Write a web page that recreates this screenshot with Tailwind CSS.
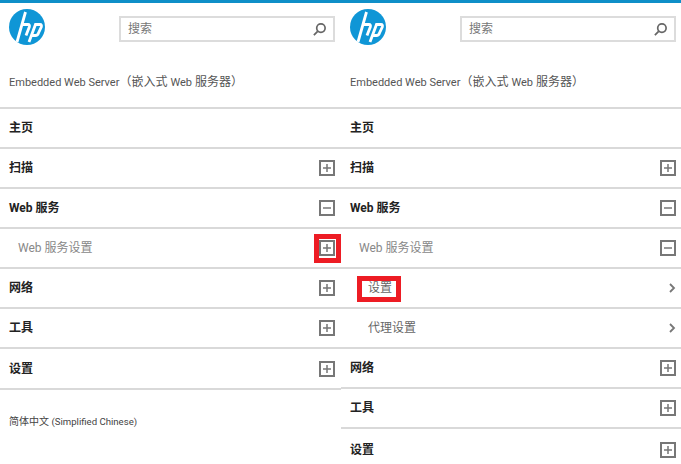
<!DOCTYPE html>
<html lang="zh-CN">
<head>
  <meta charset="UTF-8" />
  <title>HP Embedded Web Server</title>
  <script src="https://cdn.jsdelivr.net/npm/@tailwindcss/browser@4"></script>
</head>
<body class="w-[681px] h-[464px] overflow-hidden bg-white font-['Roboto','Noto_Sans_CJK_SC',sans-serif] text-[12px] text-[#222]">
  <div class="flex h-[464px] overflow-hidden">

    <!-- Left panel -->
    <div class="relative w-[341px] shrink-0 border-t-[3px] border-[#0f8fc8]">
      <div class="flex h-[54px] pl-[9px] pr-[6px] pt-[6px] items-start justify-between">
        <svg class="w-[36px] h-[36px]" viewBox="0 0 36 36"><circle cx="18" cy="18" r="18" fill="#0f96d6"/><path d="M16.500 3 L8 33 M12 15.500 H19 Q21 15.500 20.300 18 L17 26.500 M20 33 L26.500 15.500 H31 Q33 15.500 32.300 18 L29.500 24 Q28.700 26.500 26.500 26.500 H23" fill="none" stroke="#fff" stroke-width="2.800"/></svg>
        <div class="mt-[7px] flex h-[26px] w-[216px] items-center justify-between border-2 border-[#dcdcdc] pl-[7px] pr-[6px] text-[12px] text-[#777]">
          <span>搜索</span>
          <svg class="w-[15px] h-[15px]" viewBox="0 0 16 16" fill="none" stroke="#666" stroke-width="1.800"><circle cx="9.500" cy="6.500" r="4.500"/><path d="M6 10 L2 14"/></svg>
        </div>
      </div>
      <div class="h-[52px] border-b-2 border-[#d9d9d9] pl-[9px] pt-[16px] text-[#555]"><span class="text-[11px]">Embedded Web Server</span>（嵌入式 <span class="text-[11px]">Web</span> 服务器）</div>

      <div class="flex h-[40px] items-center justify-between border-b-2 border-[#d9d9d9] pl-[9px] pr-[6px] font-bold">主页</div>
      <div class="flex h-[40px] items-center justify-between border-b-2 border-[#d9d9d9] pl-[9px] pr-[6px] font-bold">扫描
        <svg class="w-[16px] h-[16px]" viewBox="0 0 16 16" fill="none" stroke="#777"><rect x="1" y="1" width="14" height="14" stroke-width="2"/><path d="M4 8 H12 M8 4 V12" stroke-width="1.500"/></svg>
      </div>
      <div class="flex h-[40px] items-center justify-between border-b-2 border-[#d9d9d9] pl-[9px] pr-[6px] font-bold">Web 服务
        <svg class="w-[16px] h-[16px]" viewBox="0 0 16 16" fill="none" stroke="#777"><rect x="1" y="1" width="14" height="14" stroke-width="2"/><path d="M4 8 H12" stroke-width="1.500"/></svg>
      </div>
      <div class="flex h-[40px] items-center justify-between border-b-2 border-[#d9d9d9] pl-[18px] pr-[6px] text-[#888]">Web 服务设置
        <svg class="w-[16px] h-[16px]" viewBox="0 0 16 16" fill="none" stroke="#777"><rect x="1" y="1" width="14" height="14" stroke-width="2"/><path d="M4 8 H12 M8 4 V12" stroke-width="1.500"/></svg>
      </div>
      <div class="flex h-[40px] items-center justify-between border-b-2 border-[#d9d9d9] pl-[9px] pr-[6px] font-bold">网络
        <svg class="w-[16px] h-[16px]" viewBox="0 0 16 16" fill="none" stroke="#777"><rect x="1" y="1" width="14" height="14" stroke-width="2"/><path d="M4 8 H12 M8 4 V12" stroke-width="1.500"/></svg>
      </div>
      <div class="flex h-[40px] items-center justify-between border-b-2 border-[#d9d9d9] pl-[9px] pr-[6px] font-bold">工具
        <svg class="w-[16px] h-[16px]" viewBox="0 0 16 16" fill="none" stroke="#777"><rect x="1" y="1" width="14" height="14" stroke-width="2"/><path d="M4 8 H12 M8 4 V12" stroke-width="1.500"/></svg>
      </div>
      <div class="flex h-[41px] items-center justify-between border-b-2 border-[#d9d9d9] pl-[9px] pr-[6px] font-bold">设置
        <svg class="w-[16px] h-[16px]" viewBox="0 0 16 16" fill="none" stroke="#777"><rect x="1" y="1" width="14" height="14" stroke-width="2"/><path d="M4 8 H12 M8 4 V12" stroke-width="1.500"/></svg>
      </div>
      <div class="pl-[9px] pt-[24px] text-[10px] text-[#444]">简体中文 <span class="text-[9.6px]">(Simplified Chinese)</span></div>

      <!-- red highlight -->
      <div class="absolute left-[314px] top-[231px] h-[29px] w-[27px] border-[5px] border-[#ed1c24]"></div>
    </div>

    <!-- Right panel -->
    <div class="relative w-[340px] shrink-0 border-t-[3px] border-[#0f8fc8]">
      <div class="flex h-[54px] pl-[9px] pr-[5px] pt-[6px] items-start justify-between">
        <svg class="w-[36px] h-[36px]" viewBox="0 0 36 36"><circle cx="18" cy="18" r="18" fill="#0f96d6"/><path d="M16.500 3 L8 33 M12 15.500 H19 Q21 15.500 20.300 18 L17 26.500 M20 33 L26.500 15.500 H31 Q33 15.500 32.300 18 L29.500 24 Q28.700 26.500 26.500 26.500 H23" fill="none" stroke="#fff" stroke-width="2.800"/></svg>
        <div class="mt-[7px] flex h-[26px] w-[216px] items-center justify-between border-2 border-[#dcdcdc] pl-[7px] pr-[6px] text-[12px] text-[#777]">
          <span>搜索</span>
          <svg class="w-[15px] h-[15px]" viewBox="0 0 16 16" fill="none" stroke="#666" stroke-width="1.800"><circle cx="9.500" cy="6.500" r="4.500"/><path d="M6 10 L2 14"/></svg>
        </div>
      </div>
      <div class="h-[52px] border-b-2 border-[#d9d9d9] pl-[9px] pt-[16px] text-[#555]"><span class="text-[11px]">Embedded Web Server</span>（嵌入式 <span class="text-[11px]">Web</span> 服务器）</div>

      <div class="flex h-[40px] items-center justify-between border-b-2 border-[#d9d9d9] pl-[9px] pr-[5px] font-bold">主页</div>
      <div class="flex h-[40px] items-center justify-between border-b-2 border-[#d9d9d9] pl-[9px] pr-[5px] font-bold">扫描
        <svg class="w-[16px] h-[16px]" viewBox="0 0 16 16" fill="none" stroke="#777"><rect x="1" y="1" width="14" height="14" stroke-width="2"/><path d="M4 8 H12 M8 4 V12" stroke-width="1.500"/></svg>
      </div>
      <div class="flex h-[40px] items-center justify-between border-b-2 border-[#d9d9d9] pl-[9px] pr-[5px] font-bold">Web 服务
        <svg class="w-[16px] h-[16px]" viewBox="0 0 16 16" fill="none" stroke="#777"><rect x="1" y="1" width="14" height="14" stroke-width="2"/><path d="M4 8 H12" stroke-width="1.500"/></svg>
      </div>
      <div class="flex h-[40px] items-center justify-between border-b-2 border-[#d9d9d9] pl-[18px] pr-[5px] text-[#888]">Web 服务设置
        <svg class="w-[16px] h-[16px]" viewBox="0 0 16 16" fill="none" stroke="#777"><rect x="1" y="1" width="14" height="14" stroke-width="2"/><path d="M4 8 H12" stroke-width="1.500"/></svg>
      </div>
      <div class="flex h-[40px] items-center justify-between border-b-2 border-[#d9d9d9] pl-[27px] pr-[5px] text-[#666]">设置
        <svg class="w-[8px] h-[12px]" viewBox="0 0 8 12" fill="none" stroke="#777" stroke-width="1.800"><path d="M2 2 L6 6 L2 10"/></svg>
      </div>
      <div class="flex h-[40px] items-center justify-between border-b-2 border-[#d9d9d9] pl-[27px] pr-[5px] text-[#666]">代理设置
        <svg class="w-[8px] h-[12px]" viewBox="0 0 8 12" fill="none" stroke="#777" stroke-width="1.800"><path d="M2 2 L6 6 L2 10"/></svg>
      </div>
      <div class="flex h-[40px] items-center justify-between border-b-2 border-[#d9d9d9] pl-[9px] pr-[5px] font-bold">网络
        <svg class="w-[16px] h-[16px]" viewBox="0 0 16 16" fill="none" stroke="#777"><rect x="1" y="1" width="14" height="14" stroke-width="2"/><path d="M4 8 H12 M8 4 V12" stroke-width="1.500"/></svg>
      </div>
      <div class="flex h-[40px] items-center justify-between border-b-2 border-[#d9d9d9] pl-[9px] pr-[5px] font-bold">工具
        <svg class="w-[16px] h-[16px]" viewBox="0 0 16 16" fill="none" stroke="#777"><rect x="1" y="1" width="14" height="14" stroke-width="2"/><path d="M4 8 H12 M8 4 V12" stroke-width="1.500"/></svg>
      </div>
      <div class="flex h-[41px] items-center justify-between pl-[9px] pr-[5px] font-bold">设置
        <svg class="w-[16px] h-[16px]" viewBox="0 0 16 16" fill="none" stroke="#777"><rect x="1" y="1" width="14" height="14" stroke-width="2"/><path d="M4 8 H12 M8 4 V12" stroke-width="1.500"/></svg>
      </div>

      <!-- red highlight -->
      <div class="absolute left-[16px] top-[273px] h-[26px] w-[44px] border-[5px] border-[#ed1c24]"></div>
    </div>
  </div>
</body>
</html>
